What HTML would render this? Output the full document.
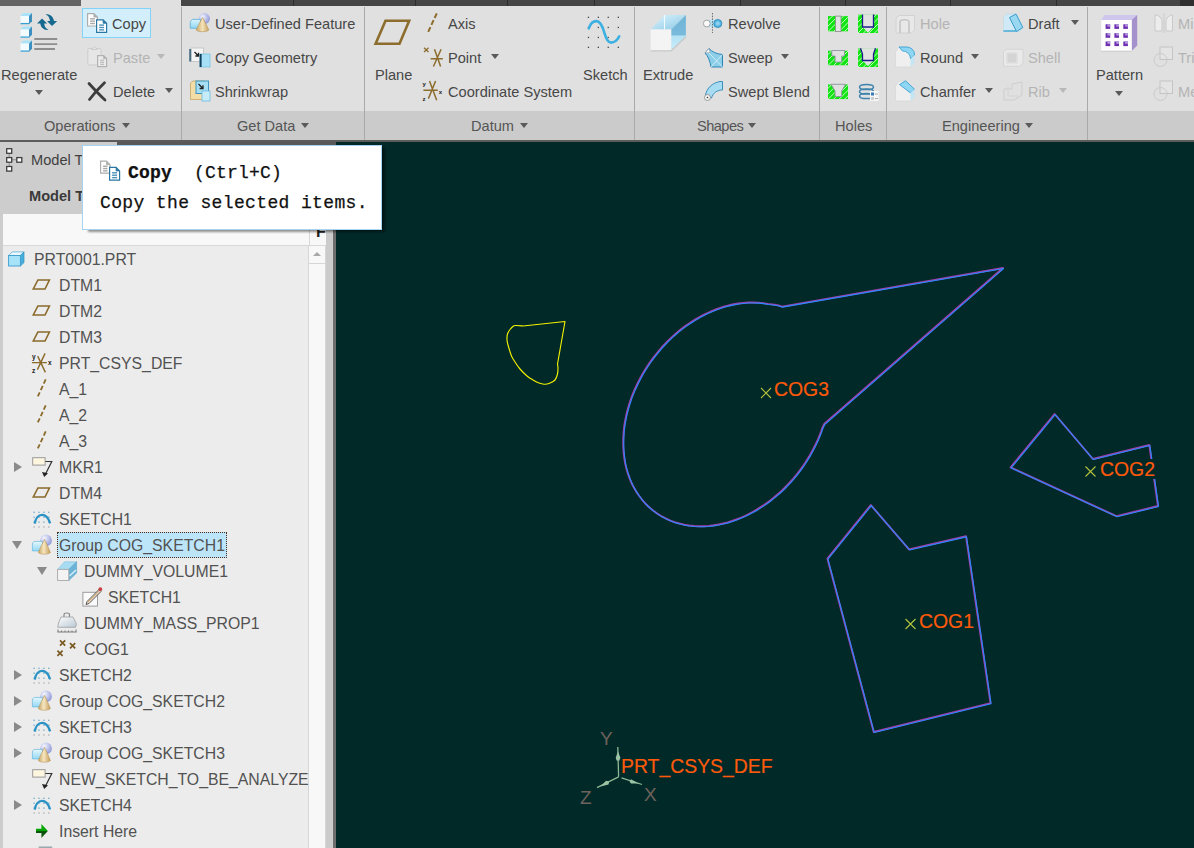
<!DOCTYPE html>
<html><head><meta charset="utf-8">
<style>
*{box-sizing:border-box}
html,body{margin:0;padding:0}
body{width:1194px;height:848px;position:relative;overflow:hidden;background:#e0e0e0;font-family:"Liberation Sans",sans-serif;color:#3c3c3c}
.a{position:absolute;white-space:nowrap}
.t{position:absolute;white-space:nowrap;font-size:14.6px;line-height:17px;color:#474747}
.g{color:#b4b4b4}
.lb{position:absolute;white-space:nowrap;font-size:14.6px;line-height:17px;color:#555555;top:118px}
.sep{position:absolute;top:7px;width:1px;height:133px;background:#a9a9a9}
.tsep{position:absolute;top:0;width:1px;height:6px;background:#2c2c2c}
.arr{position:absolute;width:0;height:0;border-left:4px solid transparent;border-right:4px solid transparent;border-top:5px solid #5a5a5a}
.arr.g2{border-top-color:#b8b8b8}
svg{position:absolute;overflow:visible}
.tr{position:absolute;white-space:nowrap;font-size:15.8px;line-height:18px;color:#525252}
.ex{position:absolute;width:0;height:0}
.ex.r{border-top:5px solid transparent;border-bottom:5px solid transparent;border-left:8px solid #8a8a8a}
.ex.d{border-left:5px solid transparent;border-right:5px solid transparent;border-top:8px solid #8a8a8a}
.gt{position:absolute;white-space:nowrap;font-size:19.4px;line-height:20px;color:#ff5a0a;-webkit-text-stroke:0.15px #ff5a0a;background:#012928}
</style></head><body>
<!-- top strip -->
<div class="a" style="left:0;top:0;width:81px;height:6px;background:#646464"></div>
<div class="a" style="left:81px;top:0;width:100px;height:6px;background:#e0e0e0"></div>
<div class="a" style="left:181px;top:0;width:1013px;height:6px;background:#454545"></div>
<div class="tsep" style="left:293px"></div><div class="tsep" style="left:415px"></div><div class="tsep" style="left:507px"></div><div class="tsep" style="left:594px"></div><div class="tsep" style="left:740px"></div><div class="tsep" style="left:845px"></div><div class="tsep" style="left:950px"></div><div class="tsep" style="left:1056px"></div>
<div class="a" style="left:1180px;top:0;width:14px;height:6px;background:#2e2e2e"></div>

<!-- ribbon label bar -->
<div class="a" style="left:0;top:111px;width:1194px;height:29px;background:#cbcbcb"></div>
<div class="a" style="left:0;top:140px;width:1194px;height:2px;background:#5c5c5c"></div>
<div class="sep" style="left:181px"></div><div class="sep" style="left:364px"></div><div class="sep" style="left:634px"></div><div class="sep" style="left:819px"></div><div class="sep" style="left:886px"></div><div class="sep" style="left:1087px"></div>

<div class="lb" style="left:44px">Operations</div><div class="arr" style="left:122px;top:123px"></div>
<div class="lb" style="left:237px">Get Data</div><div class="arr" style="left:301px;top:123px"></div>
<div class="lb" style="left:471px">Datum</div><div class="arr" style="left:520px;top:123px"></div>
<div class="lb" style="left:697px;letter-spacing:-0.55px">Shapes</div><div class="arr" style="left:748px;top:123px"></div>
<div class="lb" style="left:835px">Holes</div>
<div class="lb" style="left:942px">Engineering</div><div class="arr" style="left:1025px;top:123px"></div>

<!-- RIBBON CONTENT -->
<div class="a" style="left:82px;top:8px;width:69px;height:30px;border:1px solid #84d2f8;background:#d3effb"></div><svg width="1194" height="110" viewBox="0 0 1194 110" style="left:0;top:0"><path d="M20.5,16 L23.5,13 L32.0,13 L29.0,16 Z" fill="#a9e3f8"/><path d="M29.0,16 L32.0,13 L32.0,21.2 L29.0,24.2 Z" fill="#3d8fbf"/><rect x="20.5" y="16" width="8.5" height="8.2" fill="#f2fbff"/><path d="M20.5,23.599999999999998 L29.0,23.599999999999998" stroke="#3aa0d0" stroke-width="1.3"/><path d="M20.5,29.5 L23.5,26.5 L32.0,26.5 L29.0,29.5 Z" fill="#a9e3f8"/><path d="M29.0,29.5 L32.0,26.5 L32.0,34.7 L29.0,37.7 Z" fill="#3d8fbf"/><rect x="20.5" y="29.5" width="8.5" height="8.2" fill="#f2fbff"/><path d="M20.5,37.1 L29.0,37.1" stroke="#3aa0d0" stroke-width="1.3"/><path d="M20.5,43.5 L23.5,40.5 L32.0,40.5 L29.0,43.5 Z" fill="#a9e3f8"/><path d="M29.0,43.5 L32.0,40.5 L32.0,48.7 L29.0,51.7 Z" fill="#3d8fbf"/><rect x="20.5" y="43.5" width="8.5" height="8.2" fill="#f2fbff"/><path d="M20.5,51.1 L29.0,51.1" stroke="#3aa0d0" stroke-width="1.3"/><path d="M37,23.6 L42,18.5 L47.2,23.6 L44.2,23.6 C44.5,27 46,29 48.6,29.8 C44,30.5 41,28 40.3,23.6 Z" fill="#15698f"/><path d="M57.2,20.9 L52,25.9 L47,20.9 L50,20.9 C49.5,17.5 48,15.2 45.3,14.3 C50,13.8 53.2,16.5 54,20.9 Z" fill="#15698f"/><path d="M34.3,39 L57.2,39 M34.3,44.2 L57.2,44.2 M34.3,49 L55,49" stroke="#8e8e8e" stroke-width="1.8"/><path d="M87.6,13.6 L93.89999999999999,13.6 L97.39999999999999,17.1 L97.39999999999999,26.0 L87.6,26.0 Z" fill="#fff" stroke="#adadad" stroke-width="1.2"/><path d="M93.89999999999999,13.6 L93.89999999999999,17.1 L97.39999999999999,17.1" fill="#adadad" stroke="#adadad" stroke-width="0.8"/><path d="M90.1,18.808 L94.89999999999999,18.808" stroke="#a8a8a8" stroke-width="1.4"/><path d="M90.1,21.164 L94.89999999999999,21.164" stroke="#a8a8a8" stroke-width="1.4"/><path d="M90.1,23.52 L94.89999999999999,23.52" stroke="#a8a8a8" stroke-width="1.4"/><path d="M96.6,19.8 L103.1,19.8 L106.6,23.3 L106.6,32.4 L96.6,32.4 Z" fill="#fff" stroke="#2b77a3" stroke-width="1.2"/><path d="M103.1,19.8 L103.1,23.3 L106.6,23.3" fill="#2b77a3" stroke="#2b77a3" stroke-width="0.8"/><path d="M99.1,25.092 L104.1,25.092" stroke="#4d93bb" stroke-width="1.4"/><path d="M99.1,27.485999999999997 L104.1,27.485999999999997" stroke="#4d93bb" stroke-width="1.4"/><path d="M99.1,29.88 L104.1,29.88" stroke="#4d93bb" stroke-width="1.4"/><rect x="87.8" y="48.5" width="13.2" height="16.5" rx="1" fill="#e6e6e6" stroke="#cdcdcd" stroke-width="1"/><path d="M91.5,49.5 L94.4,46.6 L97.3,49.5 Z" fill="#e6e6e6" stroke="#c8c8c8" stroke-width="0.9"/><path d="M97.6,55.6 L103.6,55.6 L106.6,58.6 L106.6,66.6 L97.6,66.6 Z" fill="#ececec" stroke="#b2b2b2" stroke-width="1.2"/><path d="M103.6,55.6 L103.6,58.6 L106.6,58.6" fill="#b2b2b2" stroke="#b2b2b2" stroke-width="0.8"/><path d="M100.1,60.22 L104.1,60.22" stroke="#c0c0c0" stroke-width="1.4"/><path d="M100.1,62.31 L104.1,62.31" stroke="#c0c0c0" stroke-width="1.4"/><path d="M100.1,64.4 L104.1,64.4" stroke="#c0c0c0" stroke-width="1.4"/><path d="M89,83.5 C94,89 99,94.5 105,100 M104.5,82.8 C99,88 94,93.5 89.5,99.5" stroke="#3d3d3d" stroke-width="2.8" stroke-linecap="round" fill="none"/><defs><radialGradient id="sph" cx="0.35" cy="0.35" r="0.7"><stop offset="0" stop-color="#f2f4ff"/><stop offset="1" stop-color="#8f98d8"/></radialGradient><linearGradient id="cone" x1="0" x2="1"><stop offset="0" stop-color="#c9a868"/><stop offset="0.5" stop-color="#f4e2b8"/><stop offset="1" stop-color="#c6a060"/></linearGradient><linearGradient id="blu" x1="0" y1="0" x2="0" y2="1"><stop offset="0" stop-color="#d8f4fe"/><stop offset="1" stop-color="#8fd6f2"/></linearGradient></defs><circle cx="204.3" cy="18.6" r="5.6" fill="url(#sph)"/><path d="M190.3,21.5 L192.5,19.4 L200.5,19.4 L200.5,28.3 L190.3,28.3 Z" fill="url(#blu)" stroke="#5aaed6" stroke-width="0.8"/><path d="M202.6,17.5 C200,22 197.5,27 196.2,30 C198,32.2 207,32.2 208.8,30 C207.5,27 205,22 202.6,17.5 Z" fill="url(#cone)" stroke="#b89050" stroke-width="0.6"/><rect x="191" y="48" width="12.5" height="13.5" fill="#f4f4f4" stroke="#c4c4c4" stroke-width="0.9"/><path d="M190.2,49 L190.2,61.5" stroke="#4a6e82" stroke-width="2"/><path d="M194.5,52 L198.5,56 M198.5,52.8 L198.5,56 L195.4,56" stroke="#202020" stroke-width="1.3" fill="none"/><rect x="200" y="54" width="10" height="13" fill="#a6e0f6" stroke="#7cc4e4" stroke-width="0.8"/><path d="M200.6,54 L200.6,67" stroke="#123e5e" stroke-width="2"/><path d="M190.5,83 L193,81 L205,81 L205,99.5 L190.5,99.5 Z" fill="#f4dca6" stroke="#c8a866" stroke-width="0.8"/><rect x="196" y="81" width="12.5" height="12.5" fill="#a6def4" stroke="#3e94bc" stroke-width="1"/><path d="M198.5,84 L203,88.5 M203,85.2 L203,88.5 L199.6,88.5" stroke="#222" stroke-width="1.3" fill="none"/><rect x="202" y="91" width="8" height="10" fill="#c6ecfa" stroke="#6cbce0" stroke-width="0.8"/><path d="M385.5,20.8 L409.2,20.8 L399.5,43.8 L375.6,43.8 Z" fill="none" stroke="#8c6d2e" stroke-width="2.6" stroke-linejoin="miter"/><path d="M436.8,13.3 L427.8,32.7" stroke="#8c6d2e" stroke-width="2" stroke-dasharray="5.2,2.4" fill="none"/><path d="M424,47.8 L428.5,52 M428.5,47.8 L424,52" stroke="#8c6d2e" stroke-width="1.3"/><path d="M430.6,58.8 L442.8,58.8 M434.5,49.3 L440.6,66.5 M441.1,49.3 L433.4,66.5" stroke="#8c6d2e" stroke-width="1.5"/><path d="M423.4,90.3 L437.8,90.3 M429.5,81 L436.7,100.3 M435.6,81 L428.4,98.6" stroke="#8c6d2e" stroke-width="1.5"/><text x="422.5" y="86" font-size="6" font-family="Liberation Sans" font-weight="bold" fill="#222">y</text><text x="422.5" y="101" font-size="6" font-family="Liberation Sans" font-weight="bold" fill="#222">z</text><text x="438.8" y="93.5" font-size="6" font-family="Liberation Sans" font-weight="bold" fill="#222">x</text><rect x="587.8" y="16.7" width="1.3" height="1.3" fill="#4a4a4a"/><rect x="587.8" y="26.799999999999997" width="1.3" height="1.3" fill="#4a4a4a"/><rect x="587.8" y="36.8" width="1.3" height="1.3" fill="#4a4a4a"/><rect x="587.8" y="46.699999999999996" width="1.3" height="1.3" fill="#4a4a4a"/><rect x="597.6999999999999" y="16.7" width="1.3" height="1.3" fill="#4a4a4a"/><rect x="597.6999999999999" y="26.799999999999997" width="1.3" height="1.3" fill="#4a4a4a"/><rect x="597.6999999999999" y="36.8" width="1.3" height="1.3" fill="#4a4a4a"/><rect x="597.6999999999999" y="46.699999999999996" width="1.3" height="1.3" fill="#4a4a4a"/><rect x="607.6" y="16.7" width="1.3" height="1.3" fill="#4a4a4a"/><rect x="607.6" y="26.799999999999997" width="1.3" height="1.3" fill="#4a4a4a"/><rect x="607.6" y="36.8" width="1.3" height="1.3" fill="#4a4a4a"/><rect x="607.6" y="46.699999999999996" width="1.3" height="1.3" fill="#4a4a4a"/><rect x="617.6999999999999" y="16.7" width="1.3" height="1.3" fill="#4a4a4a"/><rect x="617.6999999999999" y="26.799999999999997" width="1.3" height="1.3" fill="#4a4a4a"/><rect x="617.6999999999999" y="36.8" width="1.3" height="1.3" fill="#4a4a4a"/><rect x="617.6999999999999" y="46.699999999999996" width="1.3" height="1.3" fill="#4a4a4a"/><path d="M588.8,28.4 C591,22 594.5,21 596.5,21.1 C600,21.2 602.5,26 604.4,32.8 C606.3,39.5 608,42.6 611,42.6 C615,42.6 617.5,40 619.3,36.3" stroke="#3db0e2" stroke-width="2.6" fill="none" stroke-linecap="round"/><defs><linearGradient id="exTop" x1="0" y1="0" x2="1" y2="1"><stop offset="0" stop-color="#def5fd"/><stop offset="1" stop-color="#8cc9e6"/></linearGradient><linearGradient id="exSide" x1="0" y1="0" x2="0" y2="1"><stop offset="0" stop-color="#6fb4d6"/><stop offset="0.55" stop-color="#79badb"/><stop offset="0.6" stop-color="#b4e2f4"/><stop offset="1" stop-color="#c8ecfa"/></linearGradient></defs><path d="M650.6,29.4 L664.5,15 L685.9,15 L671.2,29.4 Z" fill="url(#exTop)"/><path d="M671.2,29.4 L685.9,15 L685.9,36.5 L671.2,50.5 Z" fill="url(#exSide)"/><path d="M664.5,15 L664.5,29.4" stroke="#f0fbff" stroke-width="1"/><rect x="650.6" y="29.4" width="20.6" height="21.1" fill="#f4f4f4"/><path d="M650.6,50.8 L671.2,50.8 L685.9,36.8" stroke="#c8c8c8" stroke-width="1.2" fill="none"/><path d="M706.5,20 L718,19.5 L718,27.5 L706.5,27 Z" fill="#b8e0f2"/><circle cx="717.8" cy="23.5" r="4" fill="#5ab8e2" stroke="#2a88b8" stroke-width="0.9"/><circle cx="717.8" cy="23.5" r="2" fill="#8fd2f0"/><circle cx="706.8" cy="23.5" r="3.4" fill="#fafafa" stroke="#9a9a9a" stroke-width="0.9"/><path d="M712.5,13 L712.5,33" stroke="#555" stroke-width="0.8" stroke-dasharray="1.5,1.2"/><path d="M705,53 L709,48.5 C712,52 717,54 722.5,54.5 L722.5,67 L711,67 C710,61 708,56 705,53 Z" fill="#8ccde8" stroke="#2f86b6" stroke-width="1"/><path d="M709,53 L722.5,67 M722.5,54.5 L711,67" stroke="#d4f0fb" stroke-width="0.9"/><path d="M705,53 L709,48.5 L710,52.5 Z" fill="#ffffff" stroke="#888" stroke-width="0.5"/><path d="M705.5,95 C707,88 712,83 720,81.5 L722.5,81.5 L722.5,90 C717,90 713,93 711.5,98 Z" fill="#a8dcf2" stroke="#3c90bc" stroke-width="1"/><circle cx="707.5" cy="97.5" r="3" fill="#f4f4f4" stroke="#909090" stroke-width="0.9"/><circle cx="707.5" cy="97.5" r="0.8" fill="#333"/><clipPath id="h1"><rect x="828" y="16.1" width="20" height="15.5"/></clipPath><g clip-path="url(#h1)"><rect x="828" y="16.1" width="20" height="15.5" fill="#12e312"/><path d="M806.0,31.6 L821.5,16.1" stroke="#d0ffd0" stroke-width="0.9"/><path d="M811.5,31.6 L827.0,16.1" stroke="#d0ffd0" stroke-width="0.9"/><path d="M817.0,31.6 L832.5,16.1" stroke="#d0ffd0" stroke-width="0.9"/><path d="M822.5,31.6 L838.0,16.1" stroke="#d0ffd0" stroke-width="0.9"/><path d="M828.0,31.6 L843.5,16.1" stroke="#d0ffd0" stroke-width="0.9"/><path d="M833.5,31.6 L849.0,16.1" stroke="#d0ffd0" stroke-width="0.9"/><path d="M839.0,31.6 L854.5,16.1" stroke="#d0ffd0" stroke-width="0.9"/><path d="M844.5,31.6 L860.0,16.1" stroke="#d0ffd0" stroke-width="0.9"/><path d="M850.0,31.6 L865.5,16.1" stroke="#d0ffd0" stroke-width="0.9"/><path d="M855.5,31.6 L871.0,16.1" stroke="#d0ffd0" stroke-width="0.9"/><path d="M861.0,31.6 L876.5,16.1" stroke="#d0ffd0" stroke-width="0.9"/><path d="M866.5,31.6 L882.0,16.1" stroke="#d0ffd0" stroke-width="0.9"/></g><rect x="835.5" y="16.1" width="5.5" height="15.5" fill="#e2e2e2" stroke="#8a8a8a" stroke-width="0.8"/><clipPath id="h2"><rect x="828" y="50.5" width="20" height="15"/></clipPath><g clip-path="url(#h2)"><rect x="828" y="50.5" width="20" height="15" fill="#12e312"/><path d="M806.0,65.5 L821.0,50.5" stroke="#d0ffd0" stroke-width="0.9"/><path d="M811.5,65.5 L826.5,50.5" stroke="#d0ffd0" stroke-width="0.9"/><path d="M817.0,65.5 L832.0,50.5" stroke="#d0ffd0" stroke-width="0.9"/><path d="M822.5,65.5 L837.5,50.5" stroke="#d0ffd0" stroke-width="0.9"/><path d="M828.0,65.5 L843.0,50.5" stroke="#d0ffd0" stroke-width="0.9"/><path d="M833.5,65.5 L848.5,50.5" stroke="#d0ffd0" stroke-width="0.9"/><path d="M839.0,65.5 L854.0,50.5" stroke="#d0ffd0" stroke-width="0.9"/><path d="M844.5,65.5 L859.5,50.5" stroke="#d0ffd0" stroke-width="0.9"/><path d="M850.0,65.5 L865.0,50.5" stroke="#d0ffd0" stroke-width="0.9"/><path d="M855.5,65.5 L870.5,50.5" stroke="#d0ffd0" stroke-width="0.9"/><path d="M861.0,65.5 L876.0,50.5" stroke="#d0ffd0" stroke-width="0.9"/><path d="M866.5,65.5 L881.5,50.5" stroke="#d0ffd0" stroke-width="0.9"/></g><path d="M831.8,50.5 L844.5,50.5 L844.5,56 L841.7,56 L841.7,62.1 L835.1,62.1 L835.1,56 L831.8,56 Z" fill="#e0e0e0" stroke="#8a8aa0" stroke-width="0.8"/><clipPath id="h3"><rect x="828" y="84.3" width="20" height="15"/></clipPath><g clip-path="url(#h3)"><rect x="828" y="84.3" width="20" height="15" fill="#12e312"/><path d="M806.0,99.3 L821.0,84.3" stroke="#d0ffd0" stroke-width="0.9"/><path d="M811.5,99.3 L826.5,84.3" stroke="#d0ffd0" stroke-width="0.9"/><path d="M817.0,99.3 L832.0,84.3" stroke="#d0ffd0" stroke-width="0.9"/><path d="M822.5,99.3 L837.5,84.3" stroke="#d0ffd0" stroke-width="0.9"/><path d="M828.0,99.3 L843.0,84.3" stroke="#d0ffd0" stroke-width="0.9"/><path d="M833.5,99.3 L848.5,84.3" stroke="#d0ffd0" stroke-width="0.9"/><path d="M839.0,99.3 L854.0,84.3" stroke="#d0ffd0" stroke-width="0.9"/><path d="M844.5,99.3 L859.5,84.3" stroke="#d0ffd0" stroke-width="0.9"/><path d="M850.0,99.3 L865.0,84.3" stroke="#d0ffd0" stroke-width="0.9"/><path d="M855.5,99.3 L870.5,84.3" stroke="#d0ffd0" stroke-width="0.9"/><path d="M861.0,99.3 L876.0,84.3" stroke="#d0ffd0" stroke-width="0.9"/><path d="M866.5,99.3 L881.5,84.3" stroke="#d0ffd0" stroke-width="0.9"/></g><path d="M831,84.3 L845.5,84.3 L841.7,91 L841.7,96.5 L835.1,96.5 L835.1,91 Z" fill="#e0e0e0" stroke="#8a8aa0" stroke-width="0.8"/><clipPath id="h4"><rect x="858" y="14.4" width="20" height="18.6"/></clipPath><g clip-path="url(#h4)"><rect x="858" y="14.4" width="20" height="18.6" fill="#12e312"/><path d="M836.0,33.0 L854.6,14.4" stroke="#d0ffd0" stroke-width="0.9"/><path d="M841.5,33.0 L860.1,14.4" stroke="#d0ffd0" stroke-width="0.9"/><path d="M847.0,33.0 L865.6,14.4" stroke="#d0ffd0" stroke-width="0.9"/><path d="M852.5,33.0 L871.1,14.4" stroke="#d0ffd0" stroke-width="0.9"/><path d="M858.0,33.0 L876.6,14.4" stroke="#d0ffd0" stroke-width="0.9"/><path d="M863.5,33.0 L882.1,14.4" stroke="#d0ffd0" stroke-width="0.9"/><path d="M869.0,33.0 L887.6,14.4" stroke="#d0ffd0" stroke-width="0.9"/><path d="M874.5,33.0 L893.1,14.4" stroke="#d0ffd0" stroke-width="0.9"/><path d="M880.0,33.0 L898.6,14.4" stroke="#d0ffd0" stroke-width="0.9"/><path d="M885.5,33.0 L904.1,14.4" stroke="#d0ffd0" stroke-width="0.9"/><path d="M891.0,33.0 L909.6,14.4" stroke="#d0ffd0" stroke-width="0.9"/><path d="M896.5,33.0 L915.1,14.4" stroke="#d0ffd0" stroke-width="0.9"/></g><path d="M862.5,14.4 L862.5,27 L866,30.5 L868,33 L870,30.5 L873.5,27 L873.5,14.4 Z" fill="#e2e2e2"/><path d="M862.5,14.4 L862.5,27 L873.5,27 L873.5,14.4" fill="none" stroke="#1c1c8c" stroke-width="1.3"/><clipPath id="h5"><rect x="858" y="48.3" width="20" height="18.8"/></clipPath><g clip-path="url(#h5)"><rect x="858" y="48.3" width="20" height="18.8" fill="#12e312"/><path d="M836.0,67.1 L854.8,48.3" stroke="#d0ffd0" stroke-width="0.9"/><path d="M841.5,67.1 L860.3,48.3" stroke="#d0ffd0" stroke-width="0.9"/><path d="M847.0,67.1 L865.8,48.3" stroke="#d0ffd0" stroke-width="0.9"/><path d="M852.5,67.1 L871.3,48.3" stroke="#d0ffd0" stroke-width="0.9"/><path d="M858.0,67.1 L876.8,48.3" stroke="#d0ffd0" stroke-width="0.9"/><path d="M863.5,67.1 L882.3,48.3" stroke="#d0ffd0" stroke-width="0.9"/><path d="M869.0,67.1 L887.8,48.3" stroke="#d0ffd0" stroke-width="0.9"/><path d="M874.5,67.1 L893.3,48.3" stroke="#d0ffd0" stroke-width="0.9"/><path d="M880.0,67.1 L898.8,48.3" stroke="#d0ffd0" stroke-width="0.9"/><path d="M885.5,67.1 L904.3,48.3" stroke="#d0ffd0" stroke-width="0.9"/><path d="M891.0,67.1 L909.8,48.3" stroke="#d0ffd0" stroke-width="0.9"/><path d="M896.5,67.1 L915.3,48.3" stroke="#d0ffd0" stroke-width="0.9"/></g><path d="M860.5,48.3 L875.5,48.3 L873.5,54 L873.5,60.5 L868,66 L862.5,60.5 L862.5,54 Z" fill="#e2e2e2"/><path d="M860.5,48.3 L862.5,54 L862.5,60.5 L873.5,60.5 L873.5,54 L875.5,48.3" fill="none" stroke="#1c1c8c" stroke-width="1.3"/><g fill="none" stroke="#3e84ae" stroke-width="1.5"><ellipse cx="866.5" cy="87" rx="7" ry="2.6"/><ellipse cx="866.5" cy="91.5" rx="7" ry="2.6"/><ellipse cx="866.5" cy="96" rx="7" ry="2.6"/></g><rect x="870" y="91" width="8.5" height="10" fill="#f6f6f6"/><rect x="871" y="92.5" width="3" height="3" fill="#3a7ab8"/><rect x="871" y="97" width="3" height="3" fill="#cccccc"/><path d="M875,94 L878,94 M875,98.5 L878,98.5" stroke="#aaa" stroke-width="1"/><path d="M896,18 L899,15.5 L914.5,15.5 L914.5,30 L911.5,33 L896,33 Z" fill="#e8e8e8" stroke="#cfcfcf" stroke-width="0.9"/><path d="M900,33 L900,22 C900,19 909,19 909,22 L909,33" fill="none" stroke="#c4c4c4" stroke-width="1.6"/><path d="M895.5,52 L895.5,67 L910.5,67 L914.5,63 L914.5,55 C914.5,50 911,47 906,47 L899,47 Z" fill="#efefef" stroke="#d8d8d8" stroke-width="0.8"/><path d="M899,47 L906,47 C911,47 914.5,50 914.5,55 L910.5,59 C910.5,54.5 907,51 902.5,51 Z" fill="#8ed6f4" stroke="#3aa0d0" stroke-width="0.9"/><path d="M910.5,59 L910.5,67 L914.5,63 L914.5,55 Z" fill="#c4e6f4"/><path d="M895.5,86 L895.5,101 L910.5,101 L914.5,97 L914.5,89 L906,81 L899,81 Z" fill="#efefef" stroke="#d8d8d8" stroke-width="0.8"/><path d="M899.5,84.5 L905.5,80.8 L914.5,89.2 L910.5,93 Z" fill="#8ed6f4" stroke="#3aa0d0" stroke-width="0.9"/><path d="M910.5,93 L910.5,101 L914.5,97 L914.5,89 Z" fill="#c4e6f4"/><path d="M1003.5,17.5 L1006.5,14 L1016,14 L1022.8,27.5 L1019.5,31.5 L1003.5,31.5 Z" fill="#cfeaf6" stroke="#b8d8e6" stroke-width="0.6"/><path d="M1009.5,17.5 L1016,14 L1022.8,27.5 L1016.5,31.5 Z" fill="#9ad8f2" stroke="#3a9ccc" stroke-width="1"/><path d="M1003.5,31 L1016.5,31" stroke="#4aaad6" stroke-width="1.5"/><path d="M1003.5,52 L1006.5,49.3 L1023,49.3 L1023,63.5 L1020,66.3 L1003.5,66.3 Z" fill="#e9e9e9" stroke="#d2d2d2" stroke-width="0.9"/><rect x="1007" y="53" width="10" height="10" fill="#d4d4d4" stroke="#dedede" stroke-width="1.4"/><path d="M1004,89 L1012,89 L1012,84 L1022,82 L1022,95 L1014,100 L1004,100 Z" fill="none" stroke="#cdcdcd" stroke-width="1"/><path d="M1008,86 L1008,96 L1018,96" fill="none" stroke="#d4d4d4" stroke-width="1"/><path d="M1101.2,20 L1104.5,15 L1137.2,15 L1131.7,20 Z" fill="#cfc6ee"/><path d="M1131.7,20 L1137.2,15 L1137.2,45.5 L1131.7,51 Z" fill="#a592cc"/><rect x="1101.2" y="20" width="30.5" height="31" fill="#fdfdfd"/><path d="M1101.2,51.3 L1131.7,51.3" stroke="#cfcfcf" stroke-width="1.2"/><rect x="1105.6000000000001" y="24.3" width="4.6" height="4.6" fill="#6e2eb0"/><rect x="1107.4" y="24.3" width="2.8" height="2.3" fill="#b49ae0"/><rect x="1105.6000000000001" y="33.2" width="4.6" height="4.6" fill="#6e2eb0"/><rect x="1107.4" y="33.2" width="2.8" height="2.3" fill="#b49ae0"/><rect x="1105.6000000000001" y="41.5" width="4.6" height="4.6" fill="#6e2eb0"/><rect x="1107.4" y="41.5" width="2.8" height="2.3" fill="#b49ae0"/><rect x="1114.4" y="24.3" width="4.6" height="4.6" fill="#6e2eb0"/><rect x="1116.2" y="24.3" width="2.8" height="2.3" fill="#b49ae0"/><rect x="1114.4" y="33.2" width="4.6" height="4.6" fill="#6e2eb0"/><rect x="1116.2" y="33.2" width="2.8" height="2.3" fill="#b49ae0"/><rect x="1114.4" y="41.5" width="4.6" height="4.6" fill="#6e2eb0"/><rect x="1116.2" y="41.5" width="2.8" height="2.3" fill="#b49ae0"/><rect x="1123.3" y="24.3" width="4.6" height="4.6" fill="#6e2eb0"/><rect x="1125.1" y="24.3" width="2.8" height="2.3" fill="#b49ae0"/><rect x="1123.3" y="33.2" width="4.6" height="4.6" fill="#6e2eb0"/><rect x="1125.1" y="33.2" width="2.8" height="2.3" fill="#b49ae0"/><rect x="1123.3" y="41.5" width="4.6" height="4.6" fill="#6e2eb0"/><rect x="1125.1" y="41.5" width="2.8" height="2.3" fill="#b49ae0"/><path d="M1155,15 L1155,31 L1162,31 L1162,22 C1162,18 1159,15 1155,15 Z" fill="#ececec" stroke="#c6c6c6" stroke-width="0.9"/><path d="M1172.5,15 L1172.5,31 L1166,31 L1166,22 C1166,18 1169,15 1172.5,15 Z" fill="#ececec" stroke="#c6c6c6" stroke-width="0.9"/><path d="M1164,13 L1164,33" stroke="#c6c6c6" stroke-width="0.8"/><rect x="1160" y="47" width="12.5" height="12.5" fill="#e4e4e4" stroke="#c4c4c4" stroke-width="1"/><circle cx="1160.5" cy="60" r="6.5" fill="none" stroke="#cacaca" stroke-width="1"/><rect x="1160" y="81" width="12.5" height="12.5" fill="#e4e4e4" stroke="#c4c4c4" stroke-width="1"/><circle cx="1160.5" cy="94" r="6.5" fill="none" stroke="#cacaca" stroke-width="1"/></svg><!-- Operations -->
<div class="t" style="left:1px;top:67px">Regenerate</div><div class="arr" style="left:35px;top:90px"></div>
<div class="t" style="left:112px;top:16px">Copy</div>
<div class="t g" style="left:113px;top:50px">Paste</div><div class="arr g2" style="left:157px;top:54px"></div>
<div class="t" style="left:113px;top:84px">Delete</div><div class="arr" style="left:165px;top:88px"></div>
<!-- Get Data -->
<div class="t" style="left:215px;top:16px">User-Defined Feature</div>
<div class="t" style="left:215px;top:50px">Copy Geometry</div>
<div class="t" style="left:215px;top:84px">Shrinkwrap</div>
<!-- Datum -->
<div class="t" style="left:375px;top:67px">Plane</div>
<div class="t" style="left:448px;top:16px">Axis</div>
<div class="t" style="left:448px;top:50px">Point</div><div class="arr" style="left:491px;top:54px"></div>
<div class="t" style="left:448px;top:84px">Coordinate System</div>
<div class="t" style="left:583px;top:67px">Sketch</div>
<!-- Shapes -->
<div class="t" style="left:643px;top:67px">Extrude</div>
<div class="t" style="left:728px;top:16px">Revolve</div>
<div class="t" style="left:728px;top:50px">Sweep</div><div class="arr" style="left:781px;top:54px"></div>
<div class="t" style="left:728px;top:84px">Swept Blend</div>
<!-- Engineering -->
<div class="t g" style="left:920px;top:16px">Hole</div>
<div class="t" style="left:920px;top:50px">Round</div><div class="arr" style="left:971px;top:54px"></div>
<div class="t" style="left:920px;top:84px">Chamfer</div><div class="arr" style="left:985px;top:88px"></div>
<div class="t" style="left:1028px;top:16px">Draft</div><div class="arr" style="left:1071px;top:20px"></div>
<div class="t g" style="left:1028px;top:50px">Shell</div>
<div class="t g" style="left:1028px;top:84px">Rib</div><div class="arr g2" style="left:1059px;top:88px"></div>
<!-- Pattern -->
<div class="t" style="left:1096px;top:67px">Pattern</div><div class="arr" style="left:1115px;top:91px"></div>
<div class="t g" style="left:1178px;top:16px">Mirror</div>
<div class="t g" style="left:1178px;top:50px">Trim</div>
<div class="t g" style="left:1178px;top:84px">Merge</div>


<!-- left panel -->
<div class="a" style="left:0;top:142px;width:336px;height:706px;background:#cdcdcd"></div>
<div class="a" style="left:333px;top:142px;width:3px;height:706px;background:#6e6e6e"></div>
<div class="a" style="left:117px;top:142px;width:219px;height:3px;background:#595959"></div>
<svg width="30" height="30" viewBox="0 142 30 30" style="left:0;top:142px"><path d="M9.2,153.5 L9.2,166.2 M11.9,159.8 L16.6,159.8" stroke="#8a8a8a" stroke-width="1"/><g fill="#fff" stroke="#3e3e3e" stroke-width="1.3"><rect x="6.7" y="148.7" width="5" height="4.6"/><rect x="6.7" y="157.6" width="5" height="4.6"/><rect x="6.7" y="166.5" width="5" height="4.6"/><rect x="16.8" y="157.6" width="5" height="4.6"/></g></svg>
<div class="t" style="left:31px;top:152px;color:#404040">Model Tree</div>
<div class="t" style="left:29px;top:188px;color:#3a3a3a;font-weight:bold">Model Tree</div>
<div class="a" style="left:3px;top:214px;width:329px;height:634px;background:#ececec;overflow:hidden">
<div class="a" style="left:0;top:0;width:329px;height:32px;background:#f8f8f8;border-bottom:1px solid #d8d8d8"></div>
<div class="a" style="left:306px;top:0;width:1px;height:32px;background:#d8d8d8"></div>
<div class="a" style="left:313px;top:9px;font-size:16px;line-height:18px;color:#222;font-weight:bold">F</div>
<div class="a" style="left:305px;top:32px;width:18px;height:602px;background:#f8f8f8;border-left:1px solid #d6d6d6;border-right:1px solid #d6d6d6"></div>
<div class="a" style="left:306px;top:49px;width:16px;height:1px;background:#d6d6d6"></div>
<div class="a" style="left:310px;top:38px;width:0;height:0;border-left:4px solid transparent;border-right:4px solid transparent;border-bottom:4px solid #a8a8a8"></div>
<div class="a" style="left:323px;top:0;width:6px;height:634px;background:#cbcbcb"></div>
<div class="tr" style="left:31px;top:37px">PRT0001.PRT</div><div class="tr" style="left:56px;top:63px">DTM1</div><div class="tr" style="left:56px;top:89px">DTM2</div><div class="tr" style="left:56px;top:115px">DTM3</div><div class="tr" style="left:56px;top:141px">PRT_CSYS_DEF</div><div class="tr" style="left:56px;top:167px">A_1</div><div class="tr" style="left:56px;top:193px">A_2</div><div class="tr" style="left:56px;top:219px">A_3</div><div class="ex r" style="left:11px;top:248px"></div><div class="tr" style="left:56px;top:245px">MKR1</div><div class="tr" style="left:56px;top:271px">DTM4</div><div class="tr" style="left:56px;top:297px">SKETCH1</div><div class="a" style="left:54px;top:318px;width:170px;height:26px;background:#bde5fa;border:1px dotted #4a2a1a"></div><div class="ex d" style="left:9px;top:327px"></div><div class="tr" style="left:56px;top:323px">Group COG_SKETCH1</div><div class="ex d" style="left:34px;top:353px"></div><div class="tr" style="left:81px;top:349px">DUMMY_VOLUME1</div><div class="tr" style="left:105px;top:375px">SKETCH1</div><div class="tr" style="left:81px;top:401px">DUMMY_MASS_PROP1</div><div class="tr" style="left:81px;top:427px">COG1</div><div class="ex r" style="left:11px;top:456px"></div><div class="tr" style="left:56px;top:453px">SKETCH2</div><div class="ex r" style="left:11px;top:482px"></div><div class="tr" style="left:56px;top:479px">Group COG_SKETCH2</div><div class="ex r" style="left:11px;top:508px"></div><div class="tr" style="left:56px;top:505px">SKETCH3</div><div class="ex r" style="left:11px;top:534px"></div><div class="tr" style="left:56px;top:531px">Group COG_SKETCH3</div><div class="tr" style="left:56px;top:557px">NEW_SKETCH_TO_BE_ANALYZE</div><div class="ex r" style="left:11px;top:586px"></div><div class="tr" style="left:56px;top:583px">SKETCH4</div><div class="tr" style="left:56px;top:609px">Insert Here</div><div class="tr" style="left:56px;top:635px"></div><svg width="329" height="634" viewBox="3 214 329 634" style="left:0;top:0"><defs><radialGradient id="tsph" cx="0.35" cy="0.3" r="0.75"><stop offset="0" stop-color="#f4f6ff"/><stop offset="1" stop-color="#8e98d8"/></radialGradient><linearGradient id="tcone" x1="0" x2="1"><stop offset="0" stop-color="#c8a462"/><stop offset="0.45" stop-color="#f6e6c0"/><stop offset="1" stop-color="#c49c5a"/></linearGradient><linearGradient id="tblu" x1="0" y1="0" x2="0" y2="1"><stop offset="0" stop-color="#e4f8ff"/><stop offset="1" stop-color="#94d8f4"/></linearGradient><linearGradient id="tmass" x1="0" y1="0" x2="1" y2="1"><stop offset="0" stop-color="#ffffff"/><stop offset="1" stop-color="#b8c8d4"/></linearGradient><linearGradient id="tgrn" x1="0" y1="0" x2="0" y2="1"><stop offset="0" stop-color="#10b010"/><stop offset="0.5" stop-color="#00a000"/><stop offset="0.55" stop-color="#0a4a0a"/><stop offset="1" stop-color="#1a6a1a"/></linearGradient></defs><g transform="translate(0.0,0)"><path d="M8.6,255.5 L12.2,251.9 L24,251.9 L20.4,255.5 Z" fill="#eaf9ff" stroke="#4aa6d4" stroke-width="0.7"/><path d="M20.4,255.5 L24,251.9 L24,262.5 L20.4,266 Z" fill="#46aedc" stroke="#2f8fbf" stroke-width="0.7"/><rect x="8.6" y="255.5" width="11.8" height="10.5" fill="#a6e2f8" stroke="#3b9dcf" stroke-width="0.9"/></g><path d="M37.9,280 L49.4,280 L45.0,289 L33.3,289 Z" fill="none" stroke="#8a6a2a" stroke-width="1.6"/><path d="M37.9,306 L49.4,306 L45.0,315 L33.3,315 Z" fill="none" stroke="#8a6a2a" stroke-width="1.6"/><path d="M37.9,332 L49.4,332 L45.0,341 L33.3,341 Z" fill="none" stroke="#8a6a2a" stroke-width="1.6"/><g transform="translate(0.0,0)"><path d="M31.9,362.6 L46.9,362.6 M45.1,353.4 L37.4,369.6 M37.7,356.1 L45.4,372.4" stroke="#8a6a2a" stroke-width="1.4" fill="none"/><text x="32" y="358.5" font-size="6.5" font-family="Liberation Sans" font-weight="bold" fill="#1a1a1a">y</text><text x="32" y="372.5" font-size="6.5" font-family="Liberation Sans" font-weight="bold" fill="#1a1a1a">z</text><text x="48" y="365" font-size="6.5" font-family="Liberation Sans" font-weight="bold" fill="#1a1a1a">x</text></g><path d="M45.7,379.4 L36.8,398.7" stroke="#8a6a2a" stroke-width="1.8" stroke-dasharray="4.6,2.5" fill="none"/><path d="M45.7,405.4 L36.8,424.7" stroke="#8a6a2a" stroke-width="1.8" stroke-dasharray="4.6,2.5" fill="none"/><path d="M45.7,431.4 L36.8,450.7" stroke="#8a6a2a" stroke-width="1.8" stroke-dasharray="4.6,2.5" fill="none"/><g transform="translate(0.0,0)"><rect x="32.7" y="457.7" width="12.4" height="7.4" fill="#fff6e0" stroke="#9a9a9a" stroke-width="1"/><path d="M45.4,461.5 L51.8,461.5 L45.5,474" stroke="#333" stroke-width="1.2" fill="none"/><path d="M42,472 L44.2,477 L48,473.2 Z" fill="#222"/></g><path d="M37.9,488 L49.4,488 L45.0,497 L33.3,497 Z" fill="none" stroke="#8a6a2a" stroke-width="1.6"/><g transform="translate(0.0,0)"><rect x="33.4" y="511.69999999999993" width="1.4" height="1.2" fill="#6aa8c8"/><rect x="38.3" y="511.69999999999993" width="1.4" height="1.2" fill="#6aa8c8"/><rect x="43.199999999999996" y="511.69999999999993" width="1.4" height="1.2" fill="#6aa8c8"/><rect x="48.099999999999994" y="511.69999999999993" width="1.4" height="1.2" fill="#6aa8c8"/><rect x="33.4" y="516.6" width="1.4" height="1.2" fill="#6aa8c8"/><rect x="38.3" y="516.6" width="1.4" height="1.2" fill="#6aa8c8"/><rect x="43.199999999999996" y="516.6" width="1.4" height="1.2" fill="#6aa8c8"/><rect x="48.099999999999994" y="516.6" width="1.4" height="1.2" fill="#6aa8c8"/><rect x="33.4" y="521.5" width="1.4" height="1.2" fill="#6aa8c8"/><rect x="38.3" y="521.5" width="1.4" height="1.2" fill="#6aa8c8"/><rect x="43.199999999999996" y="521.5" width="1.4" height="1.2" fill="#6aa8c8"/><rect x="48.099999999999994" y="521.5" width="1.4" height="1.2" fill="#6aa8c8"/><rect x="33.4" y="526.4" width="1.4" height="1.2" fill="#aaaaaa"/><rect x="38.3" y="526.4" width="1.4" height="1.2" fill="#aaaaaa"/><rect x="43.199999999999996" y="526.4" width="1.4" height="1.2" fill="#aaaaaa"/><rect x="48.099999999999994" y="526.4" width="1.4" height="1.2" fill="#aaaaaa"/><path d="M34.8,523.6 C35.5,518 38.5,514.8 42,514.8 C45.5,514.8 48.5,518 50.2,523.3" stroke="#2a92c4" stroke-width="2.2" fill="none"/></g><g transform="translate(0.0,0)"><circle cx="46" cy="540.4" r="5.9" fill="url(#tsph)"/><path d="M32.4,543 L34.5,541.4 L42.5,541.4 L42.5,550.9 L32.4,550.9 Z" fill="url(#tblu)" stroke="#68b6dc" stroke-width="0.7"/><path d="M44.5,539.4 C42,544 39.5,549.5 38.3,552.5 C40,554.8 48.8,554.8 50.4,552.5 C49.2,549.5 47,544 44.5,539.4 Z" fill="url(#tcone)" stroke="#b08a48" stroke-width="0.5"/></g><g transform="translate(0.0,0)"><path d="M57.6,569.4 L64.5,561.8 L76.6,561.8 L68.8,569.4 Z" fill="#a8dcf2" stroke="#7cc0e0" stroke-width="0.6"/><path d="M68.8,569.4 L76.6,561.8 L76.6,573 L68.8,580.5 Z" fill="#6ab2d6" stroke="#5aa4c8" stroke-width="0.6"/><path d="M69.5,576 L76,570" stroke="#d6f0fa" stroke-width="1.5"/><rect x="57.6" y="569.4" width="11.2" height="11.1" fill="#f3f3f3" stroke="#a8a8a8" stroke-width="0.9"/></g><g transform="translate(0.0,0)"><rect x="82.9" y="592.3" width="14.6" height="13.8" fill="#fafafa" stroke="#9c9c9c" stroke-width="1"/><path d="M87,601.5 L99,589.5 L101,591.5 L89,603.5 L86,604.5 Z" fill="#f0e8d8" stroke="#444" stroke-width="0.9"/><path d="M87.6,602.6 L100,590.4" stroke="#c89050" stroke-width="0.9"/><circle cx="100.3" cy="589.2" r="1.9" fill="#c84040"/></g><g transform="translate(0.0,0)"><path d="M64,617 L64,614.5 C64,612.5 69.5,612.5 69.5,614.5 L69.5,617" fill="none" stroke="#8a8a8a" stroke-width="1.2"/><path d="M61,617 L73,617 L76.5,624 L75.5,627.3 L57.7,627.3 L58.5,623 Z" fill="url(#tmass)" stroke="#a0a0a0" stroke-width="0.8"/><path d="M57.4,632 L76.7,632 M58,629.5 L58,632 M61.5,630.5 L61.5,632 M65,630.5 L65,632 M68.5,630.5 L68.5,632 M72,630.5 L72,632 M76,629.5 L76,632" stroke="#7a7a7a" stroke-width="1"/></g><g transform="translate(0.0,0)" stroke="#7a5a22" stroke-width="1.7"><path d="M60.0,640.4 L65.2,645.6 M60.0,645.6 L65.2,640.4"/><path d="M70.0,643.1999999999999 L75.19999999999999,648.4 M70.0,648.4 L75.19999999999999,643.1999999999999"/><path d="M57.4,650.6 L62.6,655.8000000000001 M57.4,655.8000000000001 L62.6,650.6"/></g><g transform="translate(0.0,156)"><rect x="33.4" y="511.69999999999993" width="1.4" height="1.2" fill="#6aa8c8"/><rect x="38.3" y="511.69999999999993" width="1.4" height="1.2" fill="#6aa8c8"/><rect x="43.199999999999996" y="511.69999999999993" width="1.4" height="1.2" fill="#6aa8c8"/><rect x="48.099999999999994" y="511.69999999999993" width="1.4" height="1.2" fill="#6aa8c8"/><rect x="33.4" y="516.6" width="1.4" height="1.2" fill="#6aa8c8"/><rect x="38.3" y="516.6" width="1.4" height="1.2" fill="#6aa8c8"/><rect x="43.199999999999996" y="516.6" width="1.4" height="1.2" fill="#6aa8c8"/><rect x="48.099999999999994" y="516.6" width="1.4" height="1.2" fill="#6aa8c8"/><rect x="33.4" y="521.5" width="1.4" height="1.2" fill="#6aa8c8"/><rect x="38.3" y="521.5" width="1.4" height="1.2" fill="#6aa8c8"/><rect x="43.199999999999996" y="521.5" width="1.4" height="1.2" fill="#6aa8c8"/><rect x="48.099999999999994" y="521.5" width="1.4" height="1.2" fill="#6aa8c8"/><rect x="33.4" y="526.4" width="1.4" height="1.2" fill="#aaaaaa"/><rect x="38.3" y="526.4" width="1.4" height="1.2" fill="#aaaaaa"/><rect x="43.199999999999996" y="526.4" width="1.4" height="1.2" fill="#aaaaaa"/><rect x="48.099999999999994" y="526.4" width="1.4" height="1.2" fill="#aaaaaa"/><path d="M34.8,523.6 C35.5,518 38.5,514.8 42,514.8 C45.5,514.8 48.5,518 50.2,523.3" stroke="#2a92c4" stroke-width="2.2" fill="none"/></g><g transform="translate(0.0,156)"><circle cx="46" cy="540.4" r="5.9" fill="url(#tsph)"/><path d="M32.4,543 L34.5,541.4 L42.5,541.4 L42.5,550.9 L32.4,550.9 Z" fill="url(#tblu)" stroke="#68b6dc" stroke-width="0.7"/><path d="M44.5,539.4 C42,544 39.5,549.5 38.3,552.5 C40,554.8 48.8,554.8 50.4,552.5 C49.2,549.5 47,544 44.5,539.4 Z" fill="url(#tcone)" stroke="#b08a48" stroke-width="0.5"/></g><g transform="translate(0.0,208)"><rect x="33.4" y="511.69999999999993" width="1.4" height="1.2" fill="#6aa8c8"/><rect x="38.3" y="511.69999999999993" width="1.4" height="1.2" fill="#6aa8c8"/><rect x="43.199999999999996" y="511.69999999999993" width="1.4" height="1.2" fill="#6aa8c8"/><rect x="48.099999999999994" y="511.69999999999993" width="1.4" height="1.2" fill="#6aa8c8"/><rect x="33.4" y="516.6" width="1.4" height="1.2" fill="#6aa8c8"/><rect x="38.3" y="516.6" width="1.4" height="1.2" fill="#6aa8c8"/><rect x="43.199999999999996" y="516.6" width="1.4" height="1.2" fill="#6aa8c8"/><rect x="48.099999999999994" y="516.6" width="1.4" height="1.2" fill="#6aa8c8"/><rect x="33.4" y="521.5" width="1.4" height="1.2" fill="#6aa8c8"/><rect x="38.3" y="521.5" width="1.4" height="1.2" fill="#6aa8c8"/><rect x="43.199999999999996" y="521.5" width="1.4" height="1.2" fill="#6aa8c8"/><rect x="48.099999999999994" y="521.5" width="1.4" height="1.2" fill="#6aa8c8"/><rect x="33.4" y="526.4" width="1.4" height="1.2" fill="#aaaaaa"/><rect x="38.3" y="526.4" width="1.4" height="1.2" fill="#aaaaaa"/><rect x="43.199999999999996" y="526.4" width="1.4" height="1.2" fill="#aaaaaa"/><rect x="48.099999999999994" y="526.4" width="1.4" height="1.2" fill="#aaaaaa"/><path d="M34.8,523.6 C35.5,518 38.5,514.8 42,514.8 C45.5,514.8 48.5,518 50.2,523.3" stroke="#2a92c4" stroke-width="2.2" fill="none"/></g><g transform="translate(0.0,208)"><circle cx="46" cy="540.4" r="5.9" fill="url(#tsph)"/><path d="M32.4,543 L34.5,541.4 L42.5,541.4 L42.5,550.9 L32.4,550.9 Z" fill="url(#tblu)" stroke="#68b6dc" stroke-width="0.7"/><path d="M44.5,539.4 C42,544 39.5,549.5 38.3,552.5 C40,554.8 48.8,554.8 50.4,552.5 C49.2,549.5 47,544 44.5,539.4 Z" fill="url(#tcone)" stroke="#b08a48" stroke-width="0.5"/></g><g transform="translate(0.0,312)"><rect x="32.7" y="457.7" width="12.4" height="7.4" fill="#fff6e0" stroke="#9a9a9a" stroke-width="1"/><path d="M45.4,461.5 L51.8,461.5 L45.5,474" stroke="#333" stroke-width="1.2" fill="none"/><path d="M42,472 L44.2,477 L48,473.2 Z" fill="#222"/></g><g transform="translate(0.0,286)"><rect x="33.4" y="511.69999999999993" width="1.4" height="1.2" fill="#6aa8c8"/><rect x="38.3" y="511.69999999999993" width="1.4" height="1.2" fill="#6aa8c8"/><rect x="43.199999999999996" y="511.69999999999993" width="1.4" height="1.2" fill="#6aa8c8"/><rect x="48.099999999999994" y="511.69999999999993" width="1.4" height="1.2" fill="#6aa8c8"/><rect x="33.4" y="516.6" width="1.4" height="1.2" fill="#6aa8c8"/><rect x="38.3" y="516.6" width="1.4" height="1.2" fill="#6aa8c8"/><rect x="43.199999999999996" y="516.6" width="1.4" height="1.2" fill="#6aa8c8"/><rect x="48.099999999999994" y="516.6" width="1.4" height="1.2" fill="#6aa8c8"/><rect x="33.4" y="521.5" width="1.4" height="1.2" fill="#6aa8c8"/><rect x="38.3" y="521.5" width="1.4" height="1.2" fill="#6aa8c8"/><rect x="43.199999999999996" y="521.5" width="1.4" height="1.2" fill="#6aa8c8"/><rect x="48.099999999999994" y="521.5" width="1.4" height="1.2" fill="#6aa8c8"/><rect x="33.4" y="526.4" width="1.4" height="1.2" fill="#aaaaaa"/><rect x="38.3" y="526.4" width="1.4" height="1.2" fill="#aaaaaa"/><rect x="43.199999999999996" y="526.4" width="1.4" height="1.2" fill="#aaaaaa"/><rect x="48.099999999999994" y="526.4" width="1.4" height="1.2" fill="#aaaaaa"/><path d="M34.8,523.6 C35.5,518 38.5,514.8 42,514.8 C45.5,514.8 48.5,518 50.2,523.3" stroke="#2a92c4" stroke-width="2.2" fill="none"/></g><g transform="translate(0.0,0)"><path d="M36,828.7 L41.4,828.7 L41.4,824 L47.9,830.9 L41.4,837.9 L41.4,833 L36,833 Z" fill="url(#tgrn)"/></g><rect x="38.7" y="846.5" width="13.5" height="2.5" fill="#9aa8b0"/></svg>
</div>


<!-- graphics -->
<div class="a" style="left:336px;top:142px;width:858px;height:706px;background:#012928"></div>
<svg width="1194" height="848" viewBox="0 0 1194 848" style="left:0;top:0">
<g fill="none" stroke-linejoin="round"><path d="M1003,268 L824.4,423.8 L822.4,427.7 L821.1,431.6 L819.6,435.4 L818.1,439.1 L816.4,442.7 L814.7,446.3 L812.9,449.8 L811.0,453.2 L809.1,456.6 L807.0,459.9 L804.9,463.2 L802.8,466.4 L800.5,469.5 L798.2,472.6 L795.8,475.6 L793.3,478.6 L790.7,481.5 L788.0,484.4 L785.3,487.2 L782.5,490.0 L779.6,492.7 L776.5,495.3 L773.4,497.9 L770.2,500.5 L766.9,502.9 L763.5,505.3 L759.9,507.6 L756.3,509.9 L752.5,512.0 L748.7,514.0 L744.7,516.0 L740.6,517.8 L736.3,519.4 L732.0,521.0 L727.6,522.3 L723.0,523.5 L718.4,524.5 L713.6,525.3 L708.8,525.9 L703.9,526.2 L699.0,526.2 L694.1,526.0 L689.1,525.5 L684.2,524.7 L679.3,523.5 L674.5,522.1 L669.7,520.3 L665.2,518.2 L660.7,515.8 L656.5,513.1 L652.4,510.0 L648.6,506.7 L645.0,503.2 L641.7,499.3 L638.7,495.3 L635.9,491.1 L633.4,486.8 L631.2,482.3 L629.3,477.7 L627.7,473.0 L626.3,468.3 L625.2,463.6 L624.4,458.8 L623.8,454.1 L623.4,449.3 L623.2,444.7 L623.2,440.0 L623.4,435.5 L623.7,430.9 L624.2,426.5 L624.9,422.1 L625.7,417.9 L626.6,413.7 L627.7,409.5 L628.8,405.5 L630.1,401.5 L631.4,397.6 L632.9,393.8 L634.4,390.1 L636.1,386.5 L637.8,382.9 L639.6,379.4 L641.4,375.9 L643.4,372.5 L645.4,369.2 L647.5,365.9 L649.6,362.7 L651.9,359.6 L654.2,356.5 L656.6,353.5 L659.1,350.5 L661.6,347.5 L664.3,344.7 L667.0,341.8 L669.8,339.1 L672.7,336.4 L675.7,333.7 L678.8,331.1 L682.0,328.6 L685.3,326.1 L688.7,323.7 L692.3,321.4 L695.9,319.1 L699.6,317.0 L703.5,314.9 L707.5,313.0 L711.6,311.2 L715.8,309.5 L720.1,307.9 L724.5,306.5 L729.1,305.3 L733.7,304.3 L738.4,303.5 L743.2,302.9 L748.1,302.5 L753.0,302.4 L758.0,302.6 L762.9,303.1 L767.9,303.9 Q777,304.5 782,306.6 Z" stroke="#a040a8" stroke-width="1.9"/><path d="M1054.6,414 L1092.9,459 L1149.3,445 L1158,506 L1116.5,516.2 L1010.6,467.4 Z" stroke="#a040a8" stroke-width="1.9"/><path d="M870.8,505.1 L909,549.4 L966,536.3 L990.5,703.2 L873.7,732 L827.4,558.6 Z" stroke="#a040a8" stroke-width="1.9"/><g transform="translate(0.55,0.55)"><path d="M1003,268 L824.4,423.8 L822.4,427.7 L821.1,431.6 L819.6,435.4 L818.1,439.1 L816.4,442.7 L814.7,446.3 L812.9,449.8 L811.0,453.2 L809.1,456.6 L807.0,459.9 L804.9,463.2 L802.8,466.4 L800.5,469.5 L798.2,472.6 L795.8,475.6 L793.3,478.6 L790.7,481.5 L788.0,484.4 L785.3,487.2 L782.5,490.0 L779.6,492.7 L776.5,495.3 L773.4,497.9 L770.2,500.5 L766.9,502.9 L763.5,505.3 L759.9,507.6 L756.3,509.9 L752.5,512.0 L748.7,514.0 L744.7,516.0 L740.6,517.8 L736.3,519.4 L732.0,521.0 L727.6,522.3 L723.0,523.5 L718.4,524.5 L713.6,525.3 L708.8,525.9 L703.9,526.2 L699.0,526.2 L694.1,526.0 L689.1,525.5 L684.2,524.7 L679.3,523.5 L674.5,522.1 L669.7,520.3 L665.2,518.2 L660.7,515.8 L656.5,513.1 L652.4,510.0 L648.6,506.7 L645.0,503.2 L641.7,499.3 L638.7,495.3 L635.9,491.1 L633.4,486.8 L631.2,482.3 L629.3,477.7 L627.7,473.0 L626.3,468.3 L625.2,463.6 L624.4,458.8 L623.8,454.1 L623.4,449.3 L623.2,444.7 L623.2,440.0 L623.4,435.5 L623.7,430.9 L624.2,426.5 L624.9,422.1 L625.7,417.9 L626.6,413.7 L627.7,409.5 L628.8,405.5 L630.1,401.5 L631.4,397.6 L632.9,393.8 L634.4,390.1 L636.1,386.5 L637.8,382.9 L639.6,379.4 L641.4,375.9 L643.4,372.5 L645.4,369.2 L647.5,365.9 L649.6,362.7 L651.9,359.6 L654.2,356.5 L656.6,353.5 L659.1,350.5 L661.6,347.5 L664.3,344.7 L667.0,341.8 L669.8,339.1 L672.7,336.4 L675.7,333.7 L678.8,331.1 L682.0,328.6 L685.3,326.1 L688.7,323.7 L692.3,321.4 L695.9,319.1 L699.6,317.0 L703.5,314.9 L707.5,313.0 L711.6,311.2 L715.8,309.5 L720.1,307.9 L724.5,306.5 L729.1,305.3 L733.7,304.3 L738.4,303.5 L743.2,302.9 L748.1,302.5 L753.0,302.4 L758.0,302.6 L762.9,303.1 L767.9,303.9 Q777,304.5 782,306.6 Z" stroke="#2a88ff" stroke-width="1.1"/><path d="M1054.6,414 L1092.9,459 L1149.3,445 L1158,506 L1116.5,516.2 L1010.6,467.4 Z" stroke="#2a88ff" stroke-width="1.1"/><path d="M870.8,505.1 L909,549.4 L966,536.3 L990.5,703.2 L873.7,732 L827.4,558.6 Z" stroke="#2a88ff" stroke-width="1.1"/></g><path d="M557.5,364.0 C557.6,364.7 558.0,366.3 558.0,368.0 C558.0,369.7 558.0,372.0 557.5,374.0 C557.0,376.0 556.4,378.4 555.0,380.0 C553.6,381.6 550.8,382.8 549.0,383.5 C547.2,384.2 545.7,384.3 544.0,384.2 C542.3,384.1 540.8,383.7 539.0,383.0 C537.2,382.3 535.0,381.2 533.0,380.0 C531.0,378.8 529.2,377.8 527.0,376.0 C524.8,374.2 522.0,371.3 520.0,369.0 C518.0,366.7 516.4,364.2 515.0,362.0 C513.6,359.8 512.7,358.8 511.5,356.0 C510.3,353.2 508.8,347.7 508.0,345.0 C507.2,342.3 507.1,341.8 507.0,340.0 C506.9,338.2 507.0,335.8 507.5,334.0 C508.0,332.2 509.0,330.8 510.0,329.5 C511.0,328.2 512.5,326.7 513.5,326.0 C514.5,325.3 514.4,325.5 516.0,325.5 C517.6,325.5 521.8,325.9 523.0,326.0 L565,321.5 Z" stroke="#f2f000" stroke-width="1.15"/></g>
<path d="M761,388 L771,398 M761,398 L771,388" stroke="#b4c43c" stroke-width="1.1" fill="none"/><path d="M1085.5,466.5 L1095.5,476.5 M1085.5,476.5 L1095.5,466.5" stroke="#b4c43c" stroke-width="1.1" fill="none"/><path d="M905.5,619 L915.5,629 M905.5,629 L915.5,619" stroke="#b4c43c" stroke-width="1.1" fill="none"/>
<g stroke="#8fb896" stroke-width="1.3" fill="none">
<path d="M618.6,776.8 L617.8,747 M618.6,776.8 L597,787.7 M621.5,777.8 L642,784.5"/>
</g>
<g fill="#9cc4a4"><path d="M618,751.5 L620.3,757.5 L619.5,760.5 L616.5,760.5 L615.8,757.5 Z"/><path d="M600.5,786.5 L606,780.8 L609.2,781.5 L608.5,784.5 Z"/><path d="M638.5,783.6 L631,779.2 L629.5,781.5 L631,783.5 Z"/></g>
</svg>
<div class="a" style="left:600px;top:729px;font-size:19px;line-height:20px;color:#6e625c">Y</div>
<div class="a" style="left:580px;top:788px;font-size:19px;line-height:20px;color:#6e625c">Z</div>
<div class="a" style="left:644px;top:785px;font-size:19px;line-height:20px;color:#6e625c">X</div>
<div class="gt" style="left:774px;top:379px">COG3</div>
<div class="gt" style="left:1100px;top:459px">COG2</div>
<div class="gt" style="left:919px;top:611px">COG1</div>
<div class="gt" style="left:621px;top:756px">PRT_CSYS_DEF</div>


<!-- tooltip -->
<div class="a" style="left:88px;top:148px;width:297px;height:84px;background:rgba(0,0,0,0.42);filter:blur(0.8px)"></div>
<div class="a" style="left:82px;top:145px;width:300px;height:85px;background:#fff;border:1px solid #a6d4f0"></div>
<div class="a" style="left:128px;top:163px;font-family:'Liberation Mono',monospace;font-size:18px;line-height:20px;color:#111;letter-spacing:0.2px;-webkit-text-stroke:0.25px #111"><b>Copy</b>&nbsp; (Ctrl+C)</div>
<div class="a" style="left:100px;top:193px;font-family:'Liberation Mono',monospace;font-size:18px;line-height:20px;color:#111;letter-spacing:0.36px;-webkit-text-stroke:0.25px #111">Copy the selected items.</div>
<svg width="30" height="30" viewBox="98 158 30 30" style="left:98px;top:158px"><path d="M100.6,161.2 L106.5,161.2 L110.0,164.7 L110.0,173.2 L100.6,173.2 Z" fill="#fff" stroke="#adadad" stroke-width="1.2"/><path d="M106.5,161.2 L106.5,164.7 L110.0,164.7" fill="#adadad" stroke="#adadad" stroke-width="0.8"/><path d="M103.1,166.23999999999998 L107.5,166.23999999999998" stroke="#a8a8a8" stroke-width="1.4"/><path d="M103.1,168.51999999999998 L107.5,168.51999999999998" stroke="#a8a8a8" stroke-width="1.4"/><path d="M103.1,170.79999999999998 L107.5,170.79999999999998" stroke="#a8a8a8" stroke-width="1.4"/><path d="M109.6,167.4 L116.1,167.4 L119.6,170.9 L119.6,180.20000000000002 L109.6,180.20000000000002 Z" fill="#fff" stroke="#2b77a3" stroke-width="1.2"/><path d="M116.1,167.4 L116.1,170.9 L119.6,170.9" fill="#2b77a3" stroke="#2b77a3" stroke-width="0.8"/><path d="M112.1,172.776 L117.1,172.776" stroke="#4d93bb" stroke-width="1.4"/><path d="M112.1,175.208 L117.1,175.208" stroke="#4d93bb" stroke-width="1.4"/><path d="M112.1,177.64000000000001 L117.1,177.64000000000001" stroke="#4d93bb" stroke-width="1.4"/></svg>

</body></html>
